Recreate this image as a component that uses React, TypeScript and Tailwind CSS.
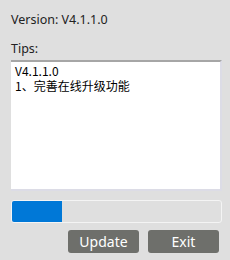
export default function App() {
  return (
    <div className="flex h-[260px] w-[230px] flex-col bg-[#dfdfdf] px-[11px] font-['Microsoft_YaHei','Noto_Sans','Noto_Sans_CJK_SC',sans-serif] text-[#222]">
      <div className="mt-[11px] h-[18px] text-[12.5px] leading-[18px]">Version: V4.1.1.0</div>
      <div className="mt-[11px] h-[18px] text-[12.5px] leading-[18px]">Tips:</div>
      <div className="mt-[2px] h-[131px] w-[211px] border-t-2 border-r-2 border-b-2 border-t-[#a6a6a6] border-r-[#dcdce6] border-b-[#dcdce6] bg-white px-[4px] pt-[1px] font-['Noto_Sans_CJK_SC',sans-serif] text-[12px] leading-[15px] text-black">
        <div>V4.1.1.0</div>
        <div>1、完善在线升级功能</div>
      </div>
      <div className="mt-[9px] h-[23px] w-[211px] overflow-hidden rounded-[3px] border border-[#f4f4f4] bg-[#dfdfdf]">
        <div className="h-full w-[50px] bg-[#0078d7]" />
      </div>
      <div className="mt-[7px] flex justify-end gap-[9px]">
        <button className="h-[23px] w-[71px] rounded-[3px] bg-[#6e6f6b] text-[14px] leading-[23px] text-white">
          Update
        </button>
        <button className="h-[23px] w-[71px] rounded-[3px] bg-[#6e6f6b] text-[14px] leading-[23px] text-white">
          Exit
        </button>
      </div>
    </div>
  );
}
